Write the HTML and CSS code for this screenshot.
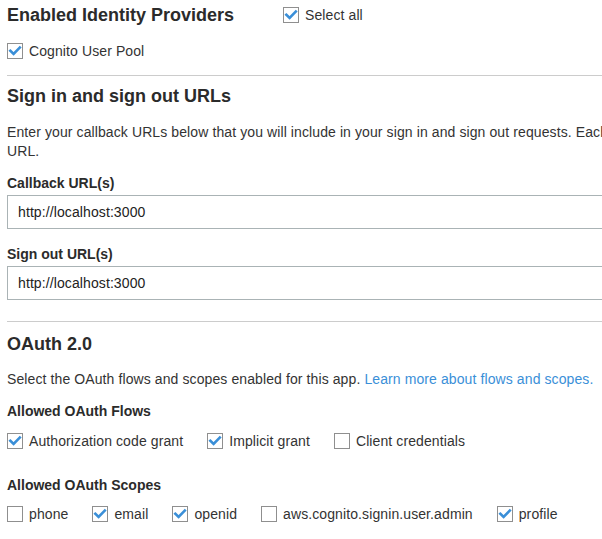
FILE: index.html
```html
<!DOCTYPE html>
<html>
<head>
<meta charset="utf-8">
<link rel="stylesheet" href="styles.css">
</head>
<body>
<div class="page">
  <div class="top-row">
    <h2 class="heading top-heading">Enabled Identity Providers</h2>
    <label class="check"><span class="box on"><svg viewBox="0 0 16 16"><path d="M3.3 7.8 L6.6 11 L12.8 4.6"/></svg></span>Select all</label>
  </div>
  <div class="check-row first-row">
    <label class="check"><span class="box on"><svg viewBox="0 0 16 16"><path d="M3.3 7.8 L6.6 11 L12.8 4.6"/></svg></span>Cognito User Pool</label>
  </div>

  <hr class="divider">

  <h2 class="heading">Sign in and sign out URLs</h2>
  <p class="desc">Enter your callback URLs below that you will include in your sign in and sign out requests. Each field can contain multiple URLs by entering a comma after each URL.</p>

  <div class="field-label label-callback">Callback URL(s)</div>
  <div class="input">http://localhost:3000</div>

  <div class="field-label label-signout">Sign out URL(s)</div>
  <div class="input">http://localhost:3000</div>

  <hr class="divider divider-2">

  <h2 class="heading">OAuth 2.0</h2>
  <p class="desc desc-oauth">Select the OAuth flows and scopes enabled for this app. <a class="link" href="#">Learn more about flows and scopes.</a></p>

  <div class="field-label label-flows">Allowed OAuth Flows</div>
  <div class="check-row flows">
    <label class="check"><span class="box on"><svg viewBox="0 0 16 16"><path d="M3.3 7.8 L6.6 11 L12.8 4.6"/></svg></span>Authorization code grant</label>
    <label class="check"><span class="box on"><svg viewBox="0 0 16 16"><path d="M3.3 7.8 L6.6 11 L12.8 4.6"/></svg></span>Implicit grant</label>
    <label class="check"><span class="box"></span>Client credentials</label>
  </div>

  <div class="field-label label-scopes">Allowed OAuth Scopes</div>
  <div class="check-row scopes">
    <label class="check"><span class="box"></span>phone</label>
    <label class="check"><span class="box on"><svg viewBox="0 0 16 16"><path d="M3.3 7.8 L6.6 11 L12.8 4.6"/></svg></span>email</label>
    <label class="check"><span class="box on"><svg viewBox="0 0 16 16"><path d="M3.3 7.8 L6.6 11 L12.8 4.6"/></svg></span>openid</label>
    <label class="check"><span class="box"></span>aws.cognito.signin.user.admin</label>
    <label class="check"><span class="box on"><svg viewBox="0 0 16 16"><path d="M3.3 7.8 L6.6 11 L12.8 4.6"/></svg></span>profile</label>
  </div>
</div>
</body>
</html>
```

FILE: styles.css
```css
html, body {
  margin: 0;
  padding: 0;
  background: #ffffff;
  overflow: hidden;
}

body {
  font-family: "Liberation Sans", Arial, Helvetica, sans-serif;
  font-size: 14px;
  color: #333333;
  letter-spacing: 0.1px;
}

.page {
  width: 1030px;
  padding: 4px 0 20px 7px;
}

.heading {
  margin: 0;
  font-size: 18px;
  font-weight: bold;
  line-height: 22px;
  letter-spacing: 0;
  color: #2b2b2b;
}

.top-row {
  display: grid;
  grid-template-columns: 276px auto;
  align-items: start;
}

.top-row .check {
  margin-top: 1px;
}

.check-row {
  display: flex;
  align-items: center;
}

.first-row {
  margin-top: 15px;
}

.check {
  display: inline-flex;
  align-items: center;
  line-height: 20px;
  height: 20px;
  margin-right: 24px;
  color: #333333;
  white-space: nowrap;
}

.box {
  width: 14px;
  height: 14px;
  border: 1px solid #8f8f8f;
  background: #ffffff;
  margin-right: 6px;
  display: inline-flex;
  align-items: center;
  justify-content: center;
  flex: none;
}

.box svg {
  width: 16px;
  height: 16px;
  margin: -1px;
  fill: none;
  stroke: #3a8fd8;
  stroke-width: 2.6;
  stroke-linecap: square;
  stroke-linejoin: miter;
}

.divider {
  border: 0;
  border-top: 1px solid #cccccc;
  margin: 14px 0 9px 0;
  height: 0;
}

.divider-2 {
  margin-top: 21px;
  margin-bottom: 11px;
}

.desc {
  margin: 16px 0 0 0;
  line-height: 19px;
}

.desc-oauth {
  margin-top: 15px;
}

.link {
  color: #3a8fd8;
  text-decoration: none;
}

.field-label {
  font-weight: bold;
  line-height: 19px;
  color: #2b2b2b;
  margin-bottom: 2px;
  letter-spacing: 0;
}

.label-callback {
  margin-top: 13px;
}

.label-signout {
  margin-top: 16px;
}

.input {
  box-sizing: border-box;
  height: 34px;
  border: 1px solid #aab3b5;
  padding: 0 10px;
  line-height: 32px;
  color: #222222;
  width: 100%;
}

.label-flows {
  margin-top: 13px;
  margin-bottom: 10px;
}

.label-scopes {
  margin-top: 25px;
  margin-bottom: 9px;
}
```
